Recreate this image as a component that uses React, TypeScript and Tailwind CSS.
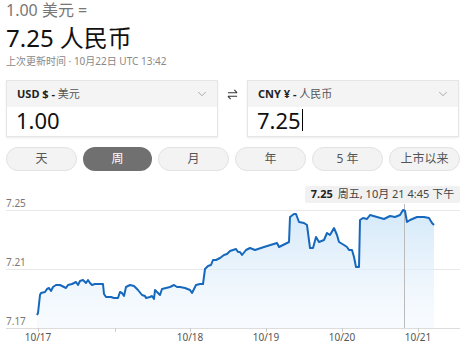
import { ChevronDown } from 'lucide-react'

const font = { fontFamily: '"Noto Sans", "Noto Sans CJK SC", sans-serif' }

// page coordinates (x, y) of the rate line
const pts: [number, number][] = [
  [37, 315], [38, 313], [40, 295], [41, 293], [45, 292], [47, 289], [49, 288], [51, 291], [53, 287],
  [56, 285], [60, 285], [64, 287], [66, 288], [68, 285], [72, 284], [76, 282], [78, 285], [80, 281],
  [83, 280], [86, 283], [88, 280], [90, 283], [92, 285], [95, 284], [100, 284], [103, 284], [104, 294],
  [106, 297], [111, 297], [114, 298], [118, 298], [120, 292], [122, 293], [124, 296], [126, 287],
  [130, 285], [134, 286], [138, 290], [142, 295], [145, 296], [146, 298], [150, 297], [152, 296],
  [154, 299], [155, 290], [158, 293], [160, 295], [162, 289], [166, 288], [170, 287], [174, 285],
  [177, 287], [180, 287], [185, 288], [190, 290], [192, 293], [196, 285], [200, 284], [203, 284],
  [205, 269], [208, 266], [211, 265], [213, 260], [216, 260], [220, 258], [224, 255], [227, 254],
  [230, 251], [233, 250], [236, 249], [238, 252], [240, 252], [242, 255], [246, 250], [250, 248],
  [255, 250], [264, 247], [277, 243], [279, 247], [287, 243], [289, 242], [290, 217], [294, 214],
  [296, 214], [299, 222], [304, 223], [307, 225], [310, 248], [313, 248], [316, 237], [319, 242],
  [324, 240], [327, 233], [330, 235], [334, 228], [337, 235], [339, 242], [344, 245], [347, 247],
  [349, 250], [352, 250], [354, 257], [356, 267], [359, 267], [360, 220], [363, 218], [367, 219],
  [370, 215], [377, 217], [384, 219], [390, 216], [395, 217], [400, 215], [403, 210], [405, 211],
  [407, 222], [410, 220], [417, 217], [424, 217], [429, 218], [432, 223], [434, 225],
]

const line = pts.map(([x, y], i) => `${i ? 'L' : 'M'}${x} ${y}`).join(' ')
const area = `${line} L434 328 L37 328 Z`

const ranges = ['天', '周', '月', '年', '5 年', '上市以来']

function CurrencyBox({ code, name, value, caret }: { code: string; name: string; value: string; caret?: boolean }) {
  return (
    <div className="w-[212px] border border-[#e6e6e6] shadow-[0_1px_2px_rgba(0,0,0,0.08)]">
      <div className="h-[26px] bg-[#f4f4f4] flex items-center justify-between pl-[10px] pr-[8px] text-[11px]">
        <span>
          <span className="font-bold text-[#222]">{code} - </span>
          <span className="text-[#555]">{name}</span>
        </span>
        <ChevronDown size={14} strokeWidth={1.2} className="text-[#888]" />
      </div>
      <div className="h-[29px] bg-white flex items-center pl-[9px] pb-[3px] text-[22px] text-[#111]">
        {value}
        {caret && <span className="w-px h-[22px] bg-black ml-px" />}
      </div>
    </div>
  )
}

export default function App() {
  return (
    <div className="w-[474px] h-[347px] bg-white overflow-hidden relative" style={font}>
      <div className="pl-[6px] pt-[1px]">
        <div className="text-[16px] leading-[18px] text-[#777]">1.00 美元 =</div>
        <div className="text-[24px] leading-[28px] text-[#111] mt-[5px]">7.25 人民币</div>
        <div className="text-[10px] leading-[14px] text-[#888] mt-[2px]">上次更新时间 · 10月22日 UTC 13:42</div>
      </div>

      <div className="flex items-center pl-[6px] mt-[12px]">
        <CurrencyBox code="USD $" name="美元" value="1.00" />
        <div className="w-[29px] flex justify-center -mt-[28px]">
          <svg width="11" height="11" viewBox="0 0 12 12" fill="none" stroke="#333" strokeWidth="1.1">
            <path d="M1 4 H11 M8 1 L11 4" />
            <path d="M11 8 H1 M4 11 L1 8" />
          </svg>
        </div>
        <CurrencyBox code="CNY ¥" name="人民币" value="7.25" caret />
      </div>

      <div className="flex gap-[6px] pl-[6px] mt-[10px] w-[460px]">
        {ranges.map((r) => (
          <div
            key={r}
            className={
              r === '周'
                ? 'flex-1 h-[24px] rounded-full bg-[#707070] text-white text-[12px] flex items-center justify-center'
                : 'flex-1 h-[24px] rounded-full bg-[#f3f3f3] border border-[#e2e2e2] text-[#555] text-[12px] flex items-center justify-center'
            }
          >
            {r}
          </div>
        ))}
      </div>

      <div className="relative mt-[5px]">
        <svg width="474" height="171" viewBox="0 176 474 171" className="block">
          <defs>
            <linearGradient id="fillGrad" x1="0" y1="0" x2="0" y2="1">
              <stop offset="0%" stopColor="#cfe6f8" stopOpacity="0.9" />
              <stop offset="100%" stopColor="#eef6fd" stopOpacity="0.4" />
            </linearGradient>
          </defs>
          <line x1="6" x2="460" y1="210.5" y2="210.5" stroke="#e8e8e8" />
          <line x1="6" x2="460" y1="269.5" y2="269.5" stroke="#e8e8e8" />
          <line x1="6" x2="460" y1="328.5" y2="328.5" stroke="#dcdcdc" />
          {[38, 115, 190, 266, 342, 418].map((x) => (
            <line key={x} x1={x + 0.5} x2={x + 0.5} y1="328" y2="332" stroke="#ccc" />
          ))}
          <path d={area} fill="url(#fillGrad)" />
          <line x1="404.5" x2="404.5" y1="204" y2="328" stroke="#bbb" />
          <path d={line} fill="none" stroke="#1668bd" strokeWidth="2" strokeLinejoin="round" />
          <g fill="#777" fontSize="10" style={font}>
            <text x="6" y="207">7.25</text>
            <text x="6" y="266">7.21</text>
            <text x="6" y="325">7.17</text>
          </g>
          <g fill="#555" fontSize="10" textAnchor="middle" style={font}>
            <text x="38" y="341">10/17</text>
            <text x="190" y="341">10/18</text>
            <text x="266" y="341">10/19</text>
            <text x="342" y="341">10/20</text>
            <text x="418" y="341">10/21</text>
          </g>
        </svg>
        <div className="absolute left-[305px] top-[10px] w-[155px] h-[17px] bg-[#f1f1f1] rounded-[2px] flex items-center justify-center text-[11px] text-[#444] gap-[5px]">
          <span className="font-bold text-[#222]">7.25</span>
          <span>周五, 10月 21 4:45 下午</span>
        </div>
      </div>
    </div>
  )
}
